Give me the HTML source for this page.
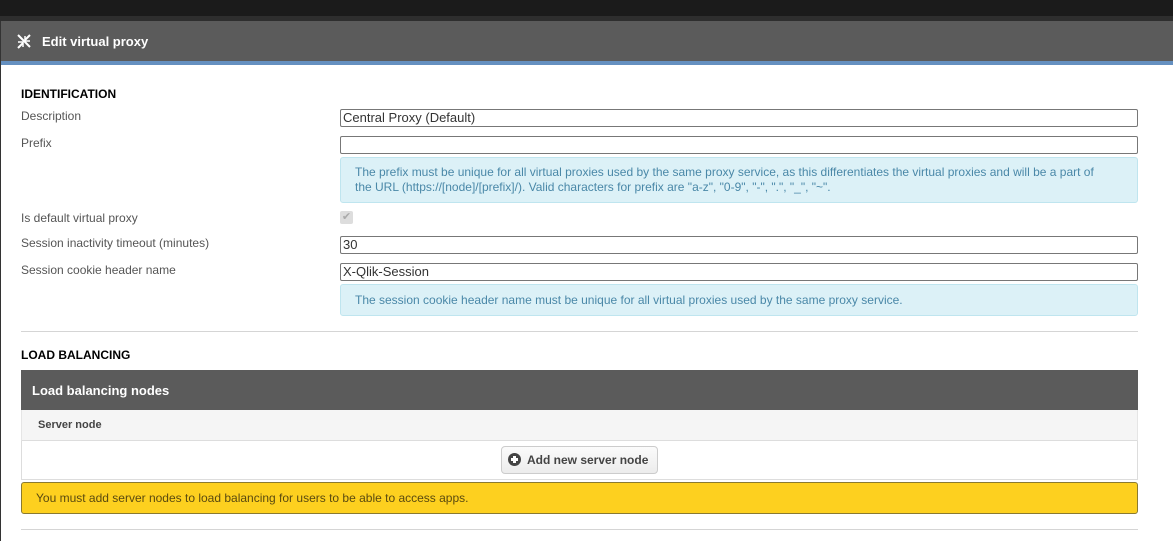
<!DOCTYPE html>
<html><head><style>
*{box-sizing:border-box;margin:0;padding:0}
body{width:1173px;height:541px;overflow:hidden;background:#fff;font-family:"Liberation Sans",sans-serif;position:relative}
.abs{position:absolute}
.top{left:0;top:0;width:1173px;height:16px;background:#1b1b1b}
.top2{left:0;top:16px;width:1173px;height:5px;background:#2e2e2e}
.hdr{left:1px;top:21px;width:1172px;height:40px;background:#5b5b5b;color:#fff;font-weight:bold;font-size:13px}
.blue{left:1px;top:61px;width:1172px;height:4px;background:#6590c0}
.lb{left:0;top:21px;width:1px;height:520px;background:#333}
.h{font-weight:bold;font-size:12px;color:#000}
.lab{font-size:12px;color:#555;left:21px}
.inp{left:340px;width:798px;height:18px;border:1px solid #777;border-radius:2px;font-size:13px;color:#333;padding-left:2px;line-height:16px}
.info{left:340px;width:798px;background:#dcf1f7;border:1px solid #bfe5ef;border-radius:3px;color:#4a88a8;font-size:12px;padding:0 30px 0 14px;line-height:15px}
.hr{left:21px;width:1117px;height:1px;background:#d5d5d5}
</style></head><body>
<div class="abs top"></div><div class="abs top2"></div>
<div class="abs hdr"><svg class="abs" style="left:15px;top:13px" width="16" height="15" viewBox="0 0 16 15"><g stroke="#fff" stroke-width="2" fill="none"><path d="M2 1l12 12M14 1l-5 5M2 14l5-5"/></g><path d="M9 2v5h5" stroke="#fff" stroke-width="1.5" fill="none"/><path d="M2 8h5v5" stroke="#fff" stroke-width="1.5" fill="none"/></svg><span class="abs" style="left:41px;top:13px">Edit virtual proxy</span></div>
<div class="abs blue"></div><div class="abs lb"></div>
<div class="abs h" style="left:21px;top:87px">IDENTIFICATION</div>
<div class="abs lab" style="top:109px">Description</div>
<div class="abs inp" style="top:109px">Central Proxy (Default)</div>
<div class="abs lab" style="top:136px">Prefix</div>
<div class="abs inp" style="top:136px"></div>
<div class="abs info" style="top:157px;height:46px;padding-top:7px">The prefix must be unique for all virtual proxies used by the same proxy service, as this differentiates the virtual proxies and will be a part of the URL (https://[node]/[prefix]/). Valid characters for prefix are "a-z", "0-9", "-", ".", "_", "~".</div>
<div class="abs lab" style="top:211px">Is default virtual proxy</div>
<div class="abs" style="left:340px;top:211px;width:13px;height:13px;background:#ddd;border-radius:2px;color:#aaa;font-size:11px;line-height:13px;text-align:center">✔</div>
<div class="abs lab" style="top:236px">Session inactivity timeout (minutes)</div>
<div class="abs inp" style="top:236px">30</div>
<div class="abs lab" style="top:263px">Session cookie header name</div>
<div class="abs inp" style="top:263px">X-Qlik-Session</div>
<div class="abs info" style="top:284px;height:32px;line-height:30px">The session cookie header name must be unique for all virtual proxies used by the same proxy service.</div>
<div class="abs hr" style="top:331px"></div>
<div class="abs h" style="left:21px;top:348px">LOAD BALANCING</div>
<div class="abs" style="left:21px;top:370px;width:1117px;height:40px;background:#5b5b5b;color:#fff;font-weight:bold;font-size:13px;padding:13px 0 0 11px">Load balancing nodes</div>
<div class="abs" style="left:21px;top:410px;width:1117px;height:31px;background:#f5f5f5;border-bottom:1px solid #ddd;border-left:1px solid #e5e5e5;border-right:1px solid #e5e5e5;font-size:11px;font-weight:bold;color:#444;padding:9px 0 0 16px">Server node</div>
<div class="abs" style="left:21px;top:441px;width:1117px;height:39px;border:1px solid #ddd;border-top:none"></div>
<div class="abs" style="left:501px;top:446px;width:157px;height:28px;border:1px solid #ccc;border-radius:4px;background:linear-gradient(#fbfbfb,#ececec);font-size:12px;font-weight:bold;color:#444;padding:6px 0 0 25px">Add new server node<span class="abs" style="left:6px;top:6px;width:13px;height:13px;border-radius:50%;background:#444"></span><span class="abs" style="left:9px;top:11px;width:7px;height:3px;background:#fff"></span><span class="abs" style="left:11px;top:9px;width:3px;height:7px;background:#fff"></span></div>
<div class="abs" style="left:21px;top:482px;width:1117px;height:32px;background:#fdd01f;border:1px solid #8a7a30;border-radius:3px;font-size:12px;color:#5a4a10;padding:8px 0 0 14px">You must add server nodes to load balancing for users to be able to access apps.</div>
<div class="abs hr" style="top:529px"></div>
</body></html>
